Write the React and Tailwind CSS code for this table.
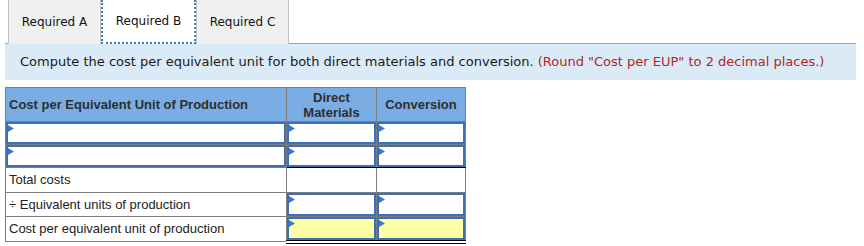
import React from 'react'

const tabFont = { fontFamily: '"DejaVu Sans", Verdana, sans-serif' }

// small blue marker shown at the top-left of every entry cell
function Marker() {
  return (
    <svg className="absolute left-0 top-[1px]" width="6" height="8" viewBox="0 0 6 8">
      <path d="M0 0 L6 3.5 L0 7 Z" fill="#3b78c9" />
    </svg>
  )
}

function Entry({ yellow = false }) {
  return (
    <div
      className={`relative h-full w-full border-2 border-[#3d6fb5] ${yellow ? 'bg-[#ffffa8]' : 'bg-white'}`}
    >
      <Marker />
    </div>
  )
}

function Tab({ label, active }) {
  return (
    <div
      className={
        active
          ? 'flex h-[44px] w-[95px] items-center justify-center border-x-2 border-b-2 border-dotted border-[#4a78b0] bg-white text-[12px] text-[#111]'
          : 'flex h-[44px] w-[93px] items-center justify-center border-x border-[#c4c4c4] bg-[#f0f0f0] text-[12px] text-[#111]'
      }
      style={tabFont}
    >
      {label}
    </div>
  )
}

export default function App() {
  const cell = 'border border-[#7d7d7d] p-0'
  return (
    <div className="h-[246px] w-[864px] overflow-hidden bg-white pl-[5px] pr-[8px]">
      {/* tab strip */}
      <div className="flex h-[44px] border-b border-[#a0a0a0] pl-[3px]">
        <Tab label="Required A" />
        <Tab label="Required B" active />
        <Tab label="Required C" />
      </div>

      {/* instruction bar */}
      <div
        className="flex h-[36px] items-center bg-[#daeaf7] pl-[15px] text-[13px] text-[#1a1a1a]"
        style={tabFont}
      >
        <span>Compute the cost per equivalent unit for both direct materials and conversion.</span>
        <span className="ml-[4px] text-[#b3261e]">(Round "Cost per EUP" to 2 decimal places.)</span>
      </div>

      {/* cost per EUP table */}
      <table
        className="mt-[7px] table-fixed border-collapse text-[13px] text-[#222]"
        style={{ fontFamily: '"Liberation Sans", Arial, sans-serif' }}
      >
        <colgroup>
          <col className="w-[281px]" />
          <col className="w-[90px]" />
          <col className="w-[89px]" />
        </colgroup>
        <thead>
          <tr className="h-[34px] bg-[#79ade3] font-bold text-[#2e2e2e]">
            <th className={`${cell} pl-[3px] text-left`}>Cost per Equivalent Unit of Production</th>
            <th className={`${cell} text-center leading-[15px]`}>
              Direct
              <br />
              Materials
            </th>
            <th className={`${cell} text-center`}>Conversion</th>
          </tr>
        </thead>
        <tbody>
          {[0, 1].map((i) => (
            <tr key={i} className="h-[23px]">
              <td className={`${cell} h-[23px]`}>
                <Entry />
              </td>
              <td className={`${cell} h-[23px] ${i === 1 ? 'border-b-black' : ''}`}>
                <Entry />
              </td>
              <td className={`${cell} h-[23px] ${i === 1 ? 'border-b-black' : ''}`}>
                <Entry />
              </td>
            </tr>
          ))}
          <tr className="h-[25px]">
            <td className={`${cell} pl-[3px]`}>Total costs</td>
            <td className={`${cell} border-t-black`}></td>
            <td className={`${cell} border-t-black`}></td>
          </tr>
          <tr className="h-[24px]">
            <td className={`${cell} pl-[3px]`}>÷ Equivalent units of production</td>
            <td className={`${cell} h-[24px]`}>
              <Entry />
            </td>
            <td className={`${cell} h-[24px]`}>
              <Entry />
            </td>
          </tr>
          <tr className="h-[25px]">
            <td className={`${cell} pl-[3px]`}>Cost per equivalent unit of production</td>
            <td className={`${cell} h-[25px] border-b-[4px] border-b-black border-double`}>
              <Entry yellow />
            </td>
            <td className={`${cell} h-[25px] border-b-[4px] border-b-black border-double`}>
              <Entry yellow />
            </td>
          </tr>
        </tbody>
      </table>
    </div>
  )
}
